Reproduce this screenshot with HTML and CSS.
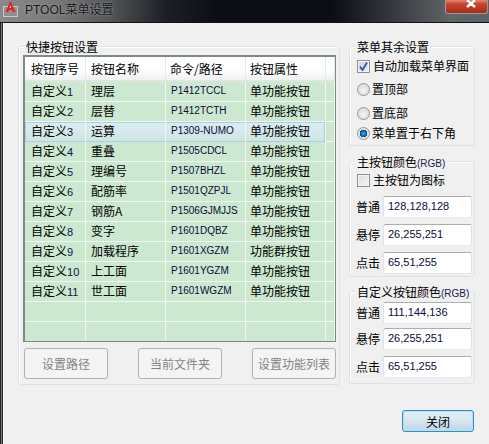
FILE: index.html
```html
<!DOCTYPE html>
<html lang="zh">
<head>
<meta charset="utf-8">
<title>PTOOL菜单设置</title>
<link rel="stylesheet" href="styles.css">
</head>
<body>
<div class="window">
  <header class="titlebar">
    <svg class="app-icon" width="16" height="16" viewBox="0 0 16 16">
      <rect x="0" y="5" width="15" height="11" fill="#c9c9c9"/>
      <rect x="1" y="6" width="13" height="9" fill="#8f8f8f"/>
      <path d="M7.500 0 L12.500 11 L9.800 11 L8.900 8.800 L6.100 8.800 L5.200 11 L2.500 11 Z" fill="#f01820"/>
      <path d="M7.500 4 L8.300 7 L6.700 7 Z" fill="#fff"/>
    </svg>
    <span class="title"><b>PTOOL</b>菜单设置</span>
    <span class="close-x"><svg width="14" height="8" viewBox="0 0 14 8"><path d="M3 0 L7 3.500 L11 0 M3 7 L7 3.500 L11 7" stroke="#fff" stroke-width="2.400" fill="none"/></svg></span>
  </header>
  <main class="client">
    <div class="columns">
      <section class="group group-main">
        <h2 class="legend">快捷按钮设置</h2>
        <div class="table-wrap">
          <table class="grid">
            <colgroup><col class="c1"><col class="c2"><col class="c3"><col class="c4"><col class="c5"></colgroup>
            <thead><tr><th>按钮序号</th><th>按钮名称</th><th>命令/路径</th><th>按钮属性</th><th></th></tr></thead>
            <tbody>
              <tr><td>自定义<i>1</i></td><td>理层</td><td class="cmd">P1412TCCL</td><td>单功能按钮</td><td></td></tr>
              <tr><td>自定义<i>2</i></td><td>层替</td><td class="cmd">P1412TCTH</td><td>单功能按钮</td><td></td></tr>
              <tr class="hot"><td>自定义<i>3</i></td><td>运算</td><td class="cmd">P1309-NUMO</td><td>单功能按钮</td><td></td></tr>
              <tr><td>自定义<i>4</i></td><td>重叠</td><td class="cmd">P1505CDCL</td><td>单功能按钮</td><td></td></tr>
              <tr><td>自定义<i>5</i></td><td>理编号</td><td class="cmd">P1507BHZL</td><td>单功能按钮</td><td></td></tr>
              <tr><td>自定义<i>6</i></td><td>配筋率</td><td class="cmd">P1501QZPJL</td><td>单功能按钮</td><td></td></tr>
              <tr><td>自定义<i>7</i></td><td>钢筋A</td><td class="cmd">P1506GJMJJS</td><td>单功能按钮</td><td></td></tr>
              <tr><td>自定义<i>8</i></td><td>变字</td><td class="cmd">P1601DQBZ</td><td>单功能按钮</td><td></td></tr>
              <tr><td>自定义<i>9</i></td><td>加载程序</td><td class="cmd">P1601XGZM</td><td>功能群按钮</td><td></td></tr>
              <tr><td>自定义<i>10</i></td><td>上工面</td><td class="cmd">P1601YGZM</td><td>单功能按钮</td><td></td></tr>
              <tr><td>自定义<i>11</i></td><td>世工面</td><td class="cmd">P1601WGZM</td><td>单功能按钮</td><td></td></tr>
              <tr><td></td><td></td><td></td><td></td><td></td></tr>
              <tr><td></td><td></td><td></td><td></td><td></td></tr>
            </tbody>
          </table>
        </div>
        <div class="actions">
          <button class="btn" disabled>设置路径</button>
          <button class="btn" disabled>当前文件夹</button>
          <button class="btn" disabled>设置功能列表</button>
        </div>
      </section>
      <aside class="side">
        <section class="group group-menu">
          <h2 class="legend">菜单其余设置</h2>
          <label class="opt opt-auto"><span class="check on"><svg width="9" height="9" viewBox="0 0 9 9"><path d="M1 4.500 L3.500 8 L8 0.500" stroke="#3a50a8" stroke-width="1.800" fill="none"/></svg></span>自动加载菜单界面</label>
          <label class="opt opt-top"><span class="radio"></span>置顶部</label>
          <label class="opt opt-bottom"><span class="radio"></span>置底部</label>
          <label class="opt opt-corner"><span class="radio sel"></span>菜单置于右下角</label>
        </section>
        <section class="group group-color">
          <h2 class="legend">主按钮颜色<small>(RGB)</small></h2>
          <label class="opt opt-icon"><span class="check"></span>主按钮为图标</label>
          <div class="field"><span>普通</span><input class="rgb" value="128,128,128"></div>
          <div class="field"><span>悬停</span><input class="rgb" value="26,255,251"></div>
          <div class="field"><span>点击</span><input class="rgb" value="65,51,255"></div>
        </section>
        <section class="group group-custom">
          <h2 class="legend">自定义按钮颜色<small>(RGB)</small></h2>
          <div class="field"><span>普通</span><input class="rgb" value="111,144,136"></div>
          <div class="field"><span>悬停</span><input class="rgb" value="26,255,251"></div>
          <div class="field"><span>点击</span><input class="rgb" value="65,51,255"></div>
        </section>
      </aside>
    </div>
    <footer class="footer"><button class="btn-close">关闭</button></footer>
  </main>
</div>
</body>
</html>
```
FILE: styles.css
```css
* { box-sizing: border-box; }
html, body { margin: 0; padding: 0; }
body {
  width: 489px;
  height: 444px;
  overflow: hidden;
  background: #f0f0f0;
  font-family: "Noto Sans CJK SC", "Liberation Sans", sans-serif;
  font-size: 12px;
  color: #000;
}
.window { height: 444px; display: flex; flex-direction: column; }
.titlebar {
  height: 23px;
  flex: none;
  display: flex;
  align-items: flex-start;
  padding: 1px 1px 0 3px;
  background: linear-gradient(90deg, #8a8a8a 0, #777 12%, #55575a 22%, #1c1f24 34%, #0a0d12 45%, #0a0d14 68%, #3c3f44 82%, #5f6467 92%, #5c6265 100%);
  border-bottom: 1px solid #141414;
}
.app-icon { flex: none; }
.title {
  margin: 0 0 0 6px;
  font-size: 12px;
  line-height: 16px;
  color: #16181c;
  text-shadow: 0 0 3px #aaa;
}
.title b { font-family: "Liberation Sans", sans-serif; font-size: 12px; font-weight: 400; }
.close-x {
  margin-left: auto;
  width: 43px;
  height: 14px;
  margin-top: -1px;
  padding-left: 9px;
  display: flex;
  justify-content: center;
  background: linear-gradient(#e08a72 0, #c9452e 30%, #a82a1a 100%);
  border: 1px solid #9a9a9a;
  border-top: 0;
  border-radius: 0 0 3px 3px;
}
.client {
  flex: 1;
  min-height: 0;
  display: flex;
  flex-direction: column;
  margin-left: 3px;
  padding: 23px 14px 0 14px;
  background: #f0f0f0;
  border-left: 1px solid #fff;
  box-shadow: -1px 0 0 #222, -2px 0 0 #7a8288, -3px 0 0 #222;
}
.columns { display: flex; gap: 9px; align-items: flex-start; }
.group {
  position: relative;
  border: 1px solid #dce3e8;
  border-radius: 3px;
  box-shadow: inset 1px 1px 0 #fff;
}
.legend {
  position: absolute;
  top: -8px;
  left: 5px;
  margin: 0;
  padding: 0 2px;
  background: #f0f0f0;
  font-size: 12px;
  font-weight: 400;
  line-height: 15px;
  white-space: nowrap;
}
.legend small { font-family: "Liberation Sans", sans-serif; font-size: 10px; color: #1a1a50; }
.group-main { width: 322px; height: 339px; padding: 8px 0 0 4px; }
.table-wrap {
  width: 313px;
  height: 287px;
  border: 1px solid #7d8b85;
  border-top-width: 2px;
  border-left-width: 2px;
  overflow: hidden;
}
.grid { border-collapse: separate; border-spacing: 0; table-layout: fixed; width: 310px; }
.c1 { width: 61px; }
.c2 { width: 80px; }
.c3 { width: 80px; }
.c4 { width: 80px; }
.c5 { width: 9px; }
.grid th {
  height: 25px;
  padding: 0 0 0 4px;
  text-align: left;
  font-weight: 400;
  background: linear-gradient(#fff 0, #fff 55%, #eef0f1 100%);
  border-right: 1px solid #e3e8ea;
  border-bottom: 2px solid #dfe6e2;
  line-height: 16px;
}
.grid td {
  height: 20px;
  padding: 0 0 1px 4px;
  background: #cde8d0;
  border-right: 1px solid #f2f7f2;
  border-bottom: 1px solid #f2f7f2;
  line-height: 16px;
  white-space: nowrap;
}
.grid th:first-child, .grid td:first-child { padding-left: 6px; }
.grid th:nth-child(2), .grid td:nth-child(2) { padding-left: 5px; }
.grid i { font-style: normal; font-family: "Liberation Sans", sans-serif; font-size: 11px; color: #101040; }
.grid td.cmd { font-family: "Liberation Sans", sans-serif; font-size: 10px; color: #0a0a3c; padding-left: 5px; }
.grid tr.hot td {
  background: linear-gradient(#dcecf2 0, #cfe5e2 100%);
  border-bottom: 1px solid #a8cfe6;
  box-shadow: inset 0 1px 0 #a8cfe6;
}
.grid tr.hot td:first-child { box-shadow: inset 1px 1px 0 #a8cfe6; }
.grid tr.hot td:nth-child(4) { box-shadow: inset -1px 1px 0 #a8cfe6; }
.grid tr.hot td:last-child { background: #cde8d0; box-shadow: none; border-bottom-color: #f2f7f2; }
.actions { display: flex; justify-content: space-between; margin-top: 6px; padding-left: 1px; width: 313px; }
.btn {
  width: 84px;
  height: 31px;
  padding: 0;
  font: inherit;
  color: #838383;
  background: #f4f4f4;
  border: 1px solid #adb2b5;
  border-radius: 3px;
}
.side { width: 126px; display: flex; flex-direction: column; }
.group-menu { height: 100px; }
.group-color { height: 116px; margin-top: 15px; }
.group-custom { height: 93px; margin-top: 14px; padding-top: 10px; }
.opt { display: flex; align-items: center; gap: 3px; height: 16px; line-height: 16px; white-space: nowrap; margin-left: 7px; }
.opt-auto { margin-top: 11px; }
.opt-top { margin-top: 7px; gap: 2px; }
.opt-bottom { margin-top: 8px; gap: 2px; }
.opt-corner { margin-top: 4px; gap: 2px; }
.opt-icon { margin-top: 10px; }
.check {
  flex: none;
  width: 13px;
  height: 13px;
  display: flex;
  align-items: center;
  justify-content: center;
  border: 1px solid #8e8f8f;
  background: linear-gradient(135deg, #dadbdc, #f6f6f6);
  box-shadow: inset 0 0 0 1px #f4f4f4;
}
.check.on { background: linear-gradient(135deg, #c8d0e0, #eef0f6); }
.radio {
  flex: none;
  width: 13px;
  height: 13px;
  border-radius: 50%;
  border: 1px solid #959595;
  background: radial-gradient(circle at 50% 60%, #f6f6f6 0, #dcdcdc 70%);
}
.radio.sel { background: radial-gradient(circle at 50% 50%, #2fb4ea 0, #0a5ea6 38%, #0a4a88 46%, #e8e8e8 52%, #d8d8d8 100%); }
.field { display: flex; align-items: center; gap: 1px; height: 22px; margin: 0 0 6px 6px; }
.field span { flex: none; width: 26px; line-height: 16px; }
.opt-icon + .field { margin-top: 8px; }
.rgb {
  width: 89px;
  height: 22px;
  padding: 0 0 2px 4px;
  font-family: "Liberation Sans", sans-serif;
  font-size: 11px;
  color: #0a0a3c;
  background: #fff;
  border: 1px solid #fff;
  border-top-color: #abadb3;
  border-left-color: #e2e3ea;
  border-right-color: #dbdfe6;
  border-bottom-color: #e3e9ef;
  border-radius: 2px;
  outline: 0;
}
.group-custom .field:nth-of-type(1) { margin-bottom: 4px; }
.footer { display: flex; justify-content: flex-end; margin-top: 25px; padding-right: 1px; }
.btn-close {
  width: 72px;
  height: 22px;
  padding: 0;
  font: inherit;
  background: linear-gradient(#e4f1f8 0, #d5e6ef 50%, #bcd5e3 100%);
  border: 1px solid #2c8fc4;
  box-shadow: inset 0 0 0 1px #b7e0f4;
  border-radius: 3px;
}
```
